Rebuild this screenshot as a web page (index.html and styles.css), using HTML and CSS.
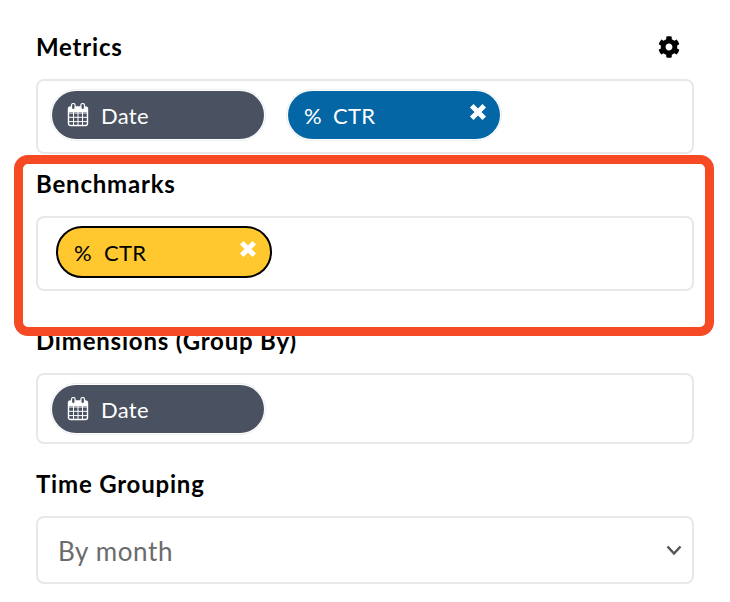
FILE: index.html
```html
<!DOCTYPE html>
<html lang="en">
<head>
    <meta charset="UTF-8">
    <meta name="viewport" content="width=device-width, initial-scale=1.0">
    <title>Chart Settings</title>
    <link rel="stylesheet" href="styles.css">
</head>
<body>
    <div class="container">
        <div class="section">
            <div class="label-row">
                <span class="label">Metrics</span>
                <svg class="gear" viewBox="0 0 512 512"><path d="M487.4 315.7l-42.6-24.6c4.3-23.2 4.3-47 0-70.2l42.6-24.6c4.9-2.8 7.1-8.6 5.5-14-11.1-35.6-30-67.8-54.7-94.6-3.8-4.1-10-5.1-14.8-2.3L380.8 110c-17.9-15.4-38.5-27.3-60.8-35.1V25.8c0-5.6-3.9-10.5-9.4-11.7-36.7-8.2-74.3-7.8-109.2 0-5.5 1.2-9.4 6.1-9.4 11.7V75c-22.2 7.9-42.8 19.8-60.8 35.1L88.7 85.5c-4.9-2.8-11-1.9-14.8 2.3-24.7 26.7-43.6 58.9-54.7 94.6-1.7 5.4.6 11.2 5.5 14L67.3 221c-4.3 23.2-4.3 47 0 70.2l-42.6 24.6c-4.9 2.8-7.1 8.6-5.5 14 11.1 35.6 30 67.8 54.7 94.6 3.8 4.1 10 5.1 14.8 2.3l42.6-24.6c17.9 15.4 38.5 27.3 60.8 35.1v49.2c0 5.6 3.9 10.5 9.4 11.7 36.7 8.2 74.3 7.8 109.2 0 5.5-1.2 9.4-6.1 9.4-11.7v-49.2c22.2-7.9 42.8-19.8 60.8-35.1l42.6 24.6c4.9 2.8 11 1.9 14.8-2.3 24.7-26.7 43.6-58.9 54.7-94.6 1.5-5.5-.7-11.3-5.6-14.1zM256 336c-44.1 0-80-35.9-80-80s35.9-80 80-80 80 35.9 80 80-35.9 80-80 80z"/></svg>
            </div>
            <div class="field field-metrics">
                <div class="pill pill-dark">
                    <svg class="calendar" viewBox="0 0 22 24"><use href="#cal"/></svg>
                    <span>Date</span>
                </div>
                <div class="pill pill-blue">
                    <span class="pct">%</span>
                    <span>CTR</span>
                    <svg class="close" viewBox="0 0 16 16"><path d="M3 3l10 10M13 3L3 13"/></svg>
                </div>
            </div>
        </div>

        <div class="section section-benchmarks">
            <div class="highlight"></div>
            <div class="label-row"><span class="label">Benchmarks</span></div>
            <div class="field field-benchmarks">
                <div class="pill pill-yellow">
                    <span class="pct">%</span>
                    <span>CTR</span>
                    <svg class="close" viewBox="0 0 16 16"><path d="M3 3l10 10M13 3L3 13"/></svg>
                </div>
            </div>
        </div>

        <div class="section section-dimensions">
            <div class="label-row"><span class="label">Dimensions (Group By)</span></div>
            <div class="field field-dimensions">
                <div class="pill pill-dark">
                    <svg class="calendar" viewBox="0 0 22 24">
                        <g id="cal">
                            <rect x="1.500" y="4" width="19" height="18.500" rx="2" fill="none" stroke="currentColor" stroke-width="1.400"/>
                            <path d="M1.500 10h19M1.500 14.300h19M1.500 18.600h19M6.500 9v13M11 9v13M15.500 9v13" fill="none" stroke="currentColor" stroke-width="1"/>
                            <path d="M1.500 9V6a2 2 0 0 1 2-2h15a2 2 0 0 1 2 2v3z" fill="currentColor"/>
                            <rect x="4.500" y="0.500" width="3.600" height="6" rx="1.800" fill="#4a5160" stroke="currentColor" stroke-width="1.200"/>
                            <rect x="13.900" y="0.500" width="3.600" height="6" rx="1.800" fill="#4a5160" stroke="currentColor" stroke-width="1.200"/>
                        </g>
                    </svg>
                    <span>Date</span>
                </div>
            </div>
        </div>

        <div class="section section-time">
            <div class="label-row"><span class="label">Time Grouping</span></div>
            <div class="select">
                <span>By month</span>
                <svg class="chevron" viewBox="0 0 16 11"><path d="M1.500 1.500L8 8.500l6.500-7"/></svg>
            </div>
        </div>
    </div>
</body>
</html>
```

FILE: styles.css
```css
html, body {
    height: 100%;
}
body {
    font-family: Lato, "Noto Sans", sans-serif;
    margin: 0;
    background-color: #fff;
    color: #000;
    overflow: hidden;
}
.container {
    padding: 32px 36px 0;
}
.section {
    position: relative;
    margin-bottom: 15px;
}
.section-benchmarks {
    margin-bottom: 35px;
}
.section-dimensions {
    margin-bottom: 25px;
}
.label-row {
    display: flex;
    justify-content: space-between;
    align-items: center;
    height: 28px;
    margin-bottom: 19px;
}
.label {
    font-size: 24px;
    font-weight: 700;
    letter-spacing: 0.8px;
}
.gear {
    width: 22px;
    height: 22px;
    margin: 2px 14px 0 0;
}
.field {
    box-sizing: border-box;
    display: flex;
    gap: 20px;
    border: 2px solid #e8e8e8;
    border-radius: 8px;
}
.field-metrics {
    height: 75px;
    padding: 10px 12px;
}
.field-benchmarks {
    height: 75px;
    padding: 8px 18px;
}
.field-dimensions {
    height: 71px;
    padding: 10px 12px;
}
.pill {
    box-sizing: border-box;
    display: flex;
    align-items: center;
    width: 212px;
    height: 48px;
    margin: 0 2px;
    padding: 0 14px 0 16px;
    border-radius: 24px;
    color: #fff;
    font-size: 22px;
    letter-spacing: 0.3px;
    outline: 1px solid #eceef1;
    outline-offset: 1px;
}
.pill-dark {
    background-color: #4a5160;
    padding-left: 15px;
}
.pill-blue {
    background-color: #0566a5;
}
.pill-yellow {
    width: 216px;
    height: 52px;
    margin: 0;
    padding: 0 14px 0 16px;
    border: 2px solid #000;
    border-radius: 26px;
    background-color: #ffc82e;
    color: #000;
    outline: none;
}
.calendar {
    width: 22px;
    height: 24px;
    margin-right: 12px;
    color: #fff;
}
.pct {
    margin-right: 11px;
}
.pill-yellow .pct {
    margin-right: 12px;
}
.close {
    width: 20px;
    height: 20px;
    margin: -7px -2px 0 auto;
    fill: none;
    stroke: #fff;
    stroke-width: 4;
}
.select {
    box-sizing: border-box;
    display: flex;
    align-items: center;
    justify-content: space-between;
    height: 68px;
    padding: 1px 10px 0 20px;
    border: 2px solid #e8e8e8;
    border-radius: 8px;
    color: #6b6b6b;
    font-size: 26px;
    letter-spacing: 0.6px;
}
.chevron {
    width: 16px;
    height: 11px;
    fill: none;
    stroke: #555;
    stroke-width: 2.500;
}
/* red annotation drawn over the benchmarks block */
.highlight {
    position: absolute;
    top: -14px;
    left: -22px;
    right: -20px;
    height: 181px;
    box-sizing: border-box;
    border: 9px solid #f64a25;
    border-radius: 14px;
    pointer-events: none;
    z-index: 2;
}
```
